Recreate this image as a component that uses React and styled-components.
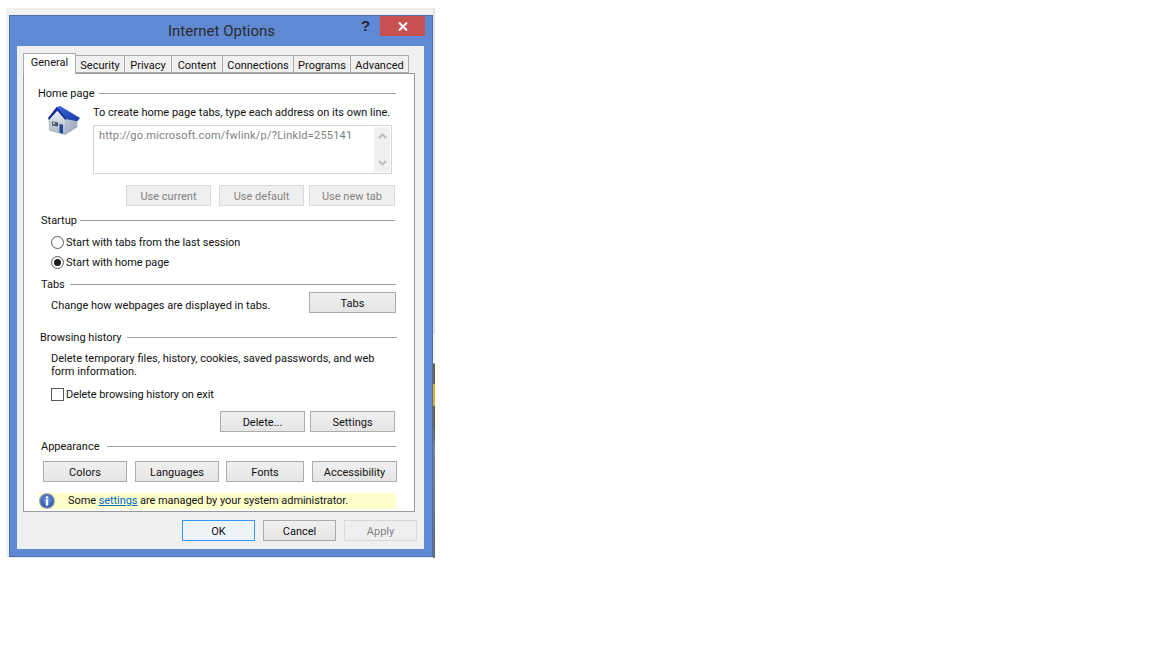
import React from 'react';
import styled, { createGlobalStyle } from 'styled-components';

const GlobalStyle = createGlobalStyle`
  html, body {
    margin: 0;
    padding: 0;
    background: #ffffff;
  }

  body {
    width: 1152px;
    height: 648px;
    overflow: hidden;
    font-family: Roboto, "Liberation Sans", sans-serif;
    font-size: 11px;
    color: #111111;
  }
`;

const Backdrop = styled.div`
  box-sizing: border-box;
  width: 429px;
  height: 550px;
  margin: 8px 0 0 6px;
  padding: 7px 2px 1px 3px;
  background-color: #f1f1f1;
  background-image: linear-gradient(
    to bottom,
    #e2e2e2 0,
    #e2e2e2 326px,
    #f4f4f4 326px,
    #f4f4f4 355px,
    #6b5f45 356px,
    #6b5f45 376px,
    #e0b020 376px,
    #e0b020 398px,
    #6b5f45 398px,
    #6b5f45 416px,
    #75809f 440px,
    #6d6a70 550px
  );
  background-size: 2px 100%;
  background-position: right top;
  background-repeat: no-repeat;
`;

const Window = styled.div`
  box-sizing: border-box;
  width: 424px;
  height: 542px;
  display: flex;
  flex-direction: column;
  background: #5f89d3;
  border: 1px solid #4a6fae;
`;

const TitleBar = styled.div`
  height: 30px;
  flex: none;
  display: flex;
  align-items: flex-start;
  padding-left: 6px;
`;

const Title = styled.div`
  flex: 1;
  margin: 5px 0 0 0;
  padding-left: 69px;
  text-align: center;
  font-size: 15px;
  line-height: 20px;
  color: #2b2b2b;
`;

const HelpMark = styled.div`
  width: 15px;
  margin-top: 1px;
  text-align: center;
  font-family: "Liberation Sans", sans-serif;
  font-size: 15px;
  font-weight: 700;
  line-height: 18px;
  color: #1f2733;
`;

const CloseButton = styled.div`
  width: 45px;
  height: 20px;
  margin: 0 7px 0 7px;
  display: flex;
  align-items: center;
  justify-content: center;
  background: #c75050;
`;

const Client = styled.div`
  box-sizing: border-box;
  flex: 1;
  margin: 0 8px 7px 7px;
  padding: 7px 8px 0 6px;
  background: #f0f0f0;
`;

const TabStrip = styled.div`
  height: 20px;
  display: flex;
  align-items: flex-end;
`;

const Tab = styled.div`
  box-sizing: border-box;
  width: ${({ $w }) => $w}px;
  height: ${({ $active }) => ($active ? 21 : 18)}px;
  margin-bottom: ${({ $active }) => ($active ? -1 : 0)}px;
  padding-top: ${({ $active }) => ($active ? 2 : 3)}px;
  position: relative;
  z-index: ${({ $active }) => ($active ? 1 : 0)};
  text-align: center;
  line-height: 14px;
  background: ${({ $active }) => ($active ? '#ffffff' : '#f0f0f0')};
  border: 1px solid #acacac;
  border-bottom: ${({ $active }) => ($active ? 'none' : '1px solid #acacac')};
  border-left: ${({ $active, $first }) => ($active || $first ? '1px solid #acacac' : 'none')};
`;

const Panel = styled.div`
  box-sizing: border-box;
  width: 392px;
  height: 439px;
  padding-top: 12px;
  background: #ffffff;
  border: 1px solid #9a9a9a;
`;

const Legend = styled.div`
  height: 14px;
  margin: ${({ $top }) => $top || 0}px ${({ $right }) => $right || 18}px 0 ${({ $left }) => $left || 16}px;
  display: flex;
  align-items: flex-start;
  gap: ${({ $gap }) => $gap || 6}px;
  line-height: 16px;
  white-space: nowrap;

  &::after {
    content: '';
    flex: 1;
    height: 1px;
    margin-top: 7px;
    background: #a0a0a0;
  }
`;

const HomeBody = styled.div`
  display: flex;
  margin-top: 6px;
`;

const HouseSlot = styled.div`
  width: 32px;
  flex: none;
  margin-left: 24px;
  margin-right: 13px;
`;

const HomeFields = styled.div`
  width: 299px;
`;

const Instruction = styled.div`
  height: 14px;
  line-height: 14px;
  white-space: nowrap;
`;

const AddressBox = styled.div`
  box-sizing: border-box;
  height: 49px;
  margin-top: 5px;
  padding: 1px;
  display: flex;
  justify-content: space-between;
  border: 1px solid #d5d5d5;
  background: #ffffff;
`;

const AddressText = styled.div`
  padding: 1px 0 0 4px;
  line-height: 15px;
  color: #7f7f7f;
  letter-spacing: 0.2px;
`;

const ScrollTrack = styled.div`
  width: 16px;
  display: flex;
  flex-direction: column;
  align-items: center;
  justify-content: space-between;
  padding: 6px 0;
  background: #f0f0f0;
`;

const ButtonRow = styled.div`
  display: flex;
  margin: ${({ $top }) => $top || 0}px 0 0 ${({ $left }) => $left}px;
  gap: ${({ $gap }) => $gap || 8}px;
`;

const Button = styled.div`
  box-sizing: border-box;
  width: ${({ $w }) => $w}px;
  height: 21px;
  margin-left: ${({ $ml }) => $ml || 0}px;
  padding-top: 2px;
  flex: none;
  display: flex;
  align-items: center;
  justify-content: center;
  background: ${({ $off, $focus }) => ($focus ? '#eef3f8' : $off ? '#efefef' : 'linear-gradient(#f0f0f0, #e5e5e5)')};
  border: 1px solid ${({ $off, $focus }) => ($focus ? '#3399ff' : $off ? '#d9d9d9' : '#acacac')};
  color: ${({ $off }) => ($off ? '#838383' : '#111111')};
`;

const OptionRow = styled.div`
  height: 14px;
  margin: ${({ $top }) => $top}px 0 0 27px;
  display: flex;
  align-items: center;
  gap: 2px;
  line-height: 14px;
`;

const OptionLabel = styled.span`
  padding-top: 2px;
  letter-spacing: -0.07px;
`;

const Radio = styled.div`
  box-sizing: border-box;
  width: 13px;
  height: 13px;
  display: flex;
  align-items: center;
  justify-content: center;
  border: 1px solid #5a5a5a;
  border-radius: 50%;
  background: #ffffff;

  &::after {
    content: '';
    display: ${({ $on }) => ($on ? 'block' : 'none')};
    width: 7px;
    height: 7px;
    border-radius: 50%;
    background: #1c1c1c;
  }
`;

const CheckBox = styled.div`
  box-sizing: border-box;
  width: 13px;
  height: 13px;
  border: 1px solid #5a5a5a;
  background: #ffffff;
`;

const TabsRow = styled.div`
  height: 21px;
  margin: 1px 18px 0 27px;
  display: flex;
  align-items: center;
  justify-content: space-between;
`;

const TabsNote = styled.span`
  padding-top: 5px;
`;

const HistoryText = styled.div`
  width: 340px;
  margin: 8px 0 0 27px;
  line-height: 13px;
`;

const InfoBar = styled.div`
  height: 16px;
  margin: 11px 18px 0 15px;
  display: flex;
  align-items: center;
  background: #ffffcc;
`;

const InfoIcon = styled.div`
  width: 16px;
  height: 16px;
  flex: none;
  margin-right: 13px;
`;

const InfoText = styled.span`
  padding-bottom: 1px;
  letter-spacing: -0.07px;
`;

const InfoLink = styled.span`
  color: #0066cc;
  text-decoration: underline;
`;

const Footer = styled.div`
  display: flex;
  margin: 8px 0 0 159px;
  gap: 8px;
`;

function HouseIcon() {
  return (
    <svg width="32" height="30" viewBox="0 0 32 30">
      <defs>
        <linearGradient id="gable" x1="0" y1="0" x2="0" y2="1">
          <stop offset="0" stopColor="#f2f5f8" />
          <stop offset="1" stopColor="#a9b5c4" />
        </linearGradient>
        <linearGradient id="side" x1="0" y1="0" x2="1" y2="1">
          <stop offset="0" stopColor="#c3cedb" />
          <stop offset="1" stopColor="#8a9ab0" />
        </linearGradient>
        <linearGradient id="roof" x1="0" y1="0" x2="1" y2="1">
          <stop offset="0" stopColor="#3a66dc" />
          <stop offset="1" stopColor="#1a3aa8" />
        </linearGradient>
      </defs>
      <path d="M17.7 12 L29.3 13.3 L29.3 21 L17.7 28.7 Z" fill="url(#side)" />
      <path d="M0.8 11 L9.3 2.7 L17.7 12 L17.7 28.7 L1.5 24.3 Z" fill="url(#gable)" stroke="#8d99a8" strokeWidth="0.5" />
      <path d="M8.7 1.3 L12 0 L32 12 L29.3 15.3 L18.7 13.3 Z" fill="url(#roof)" />
      <path d="M0 12 L8.7 0.7 L18.7 12.7 L17.3 14 L9.3 4.7 L1 14 Z" fill="#16339c" />
      <path d="M4 15.5 L10 16.5 L10 20.5 L4 19.5 Z" fill="#4a5566" />
      <path d="M5 16.5 L7 16.8 L7 18.2 L5 18 Z" fill="#e6ecf2" />
      <path d="M11.5 18 L15 18.7 L15 27.7 L11.5 26.7 Z" fill="#23479e" />
    </svg>
  );
}

function InfoGlyph() {
  return (
    <svg width="16" height="16" viewBox="0 0 16 16">
      <defs>
        <radialGradient id="info" cx="0.5" cy="0.4" r="0.65">
          <stop offset="0" stopColor="#6f9ae6" />
          <stop offset="1" stopColor="#1f45a8" />
        </radialGradient>
      </defs>
      <circle cx="8" cy="8" r="7.2" fill="url(#info)" stroke="#8a909c" strokeWidth="1.3" />
      <rect x="6.8" y="3.2" width="2.4" height="2.2" rx="1" fill="#ffffff" />
      <rect x="6.8" y="6.4" width="2.4" height="6.2" fill="#ffffff" />
    </svg>
  );
}

function ScrollArrow({ up }) {
  return (
    <svg width="9" height="6" viewBox="0 0 9 6">
      <path d={up ? 'M1 5 L4.5 1.5 L8 5' : 'M1 1 L4.5 4.5 L8 1'} fill="none" stroke="#bdbdbd" strokeWidth="2" />
    </svg>
  );
}

const tabs = [
  { label: 'General', w: 53, first: true, active: true },
  { label: 'Security', w: 49 },
  { label: 'Privacy', w: 47 },
  { label: 'Content', w: 51 },
  { label: 'Connections', w: 71 },
  { label: 'Programs', w: 57 },
  { label: 'Advanced', w: 58 },
];

export default function App() {
  return (
    <>
      <GlobalStyle />
      <Backdrop>
        <Window>
          <TitleBar>
            <Title>Internet Options</Title>
            <HelpMark>?</HelpMark>
            <CloseButton>
              <svg width="10" height="9" viewBox="0 0 10 9">
                <path d="M1 0.5 L9 8.5 M9 0.5 L1 8.5" stroke="#ffffff" strokeWidth="2" />
              </svg>
            </CloseButton>
          </TitleBar>
          <Client>
            <TabStrip>
              {tabs.map((tab) => (
                <Tab key={tab.label} $w={tab.w} $first={tab.first} $active={tab.active}>
                  {tab.label}
                </Tab>
              ))}
            </TabStrip>
            <Panel>
              <Legend $left={14} $gap={4}>Home page</Legend>
              <HomeBody>
                <HouseSlot>
                  <HouseIcon />
                </HouseSlot>
                <HomeFields>
                  <Instruction>To create home page tabs, type each address on its own line.</Instruction>
                  <AddressBox>
                    <AddressText>http://go.microsoft.com/fwlink/p/?LinkId=255141</AddressText>
                    <ScrollTrack>
                      <ScrollArrow up />
                      <ScrollArrow />
                    </ScrollTrack>
                  </AddressBox>
                </HomeFields>
              </HomeBody>
              <ButtonRow $top={11} $left={102}>
                <Button $w={85} $off>Use current</Button>
                <Button $w={85} $off>Use default</Button>
                <Button $w={86} $ml={-3} $off>Use new tab</Button>
              </ButtonRow>
              <Legend $top={7} $left={17} $right={19} $gap={3}>Startup</Legend>
              <OptionRow $top={8}>
                <Radio />
                <OptionLabel>Start with tabs from the last session</OptionLabel>
              </OptionRow>
              <OptionRow $top={6}>
                <Radio $on />
                <OptionLabel>Start with home page</OptionLabel>
              </OptionRow>
              <Legend $top={8} $left={17} $gap={5}>Tabs</Legend>
              <TabsRow>
                <TabsNote>Change how webpages are displayed in tabs.</TabsNote>
                <Button $w={87}>Tabs</Button>
              </TabsRow>
              <Legend $top={17} $left={16} $right={17} $gap={5}>Browsing history</Legend>
              <HistoryText>
                Delete temporary files, history, cookies, saved passwords, and web form information.
              </HistoryText>
              <OptionRow $top={9}>
                <CheckBox />
                <OptionLabel>Delete browsing history on exit</OptionLabel>
              </OptionRow>
              <ButtonRow $top={10} $left={196} $gap={5}>
                <Button $w={85}>Delete...</Button>
                <Button $w={85}>Settings</Button>
              </ButtonRow>
              <Legend $top={7} $left={17} $gap={7}>Appearance</Legend>
              <ButtonRow $top={8} $left={19}>
                <Button $w={84}>Colors</Button>
                <Button $w={84}>Languages</Button>
                <Button $w={78} $ml={-1}>Fonts</Button>
                <Button $w={85}>Accessibility</Button>
              </ButtonRow>
              <InfoBar>
                <InfoIcon>
                  <InfoGlyph />
                </InfoIcon>
                <InfoText>
                  Some <InfoLink>settings</InfoLink> are managed by your system administrator.
                </InfoText>
              </InfoBar>
            </Panel>
            <Footer>
              <Button $w={73} $focus>OK</Button>
              <Button $w={73}>Cancel</Button>
              <Button $w={73} $off>Apply</Button>
            </Footer>
          </Client>
        </Window>
      </Backdrop>
    </>
  );
}
